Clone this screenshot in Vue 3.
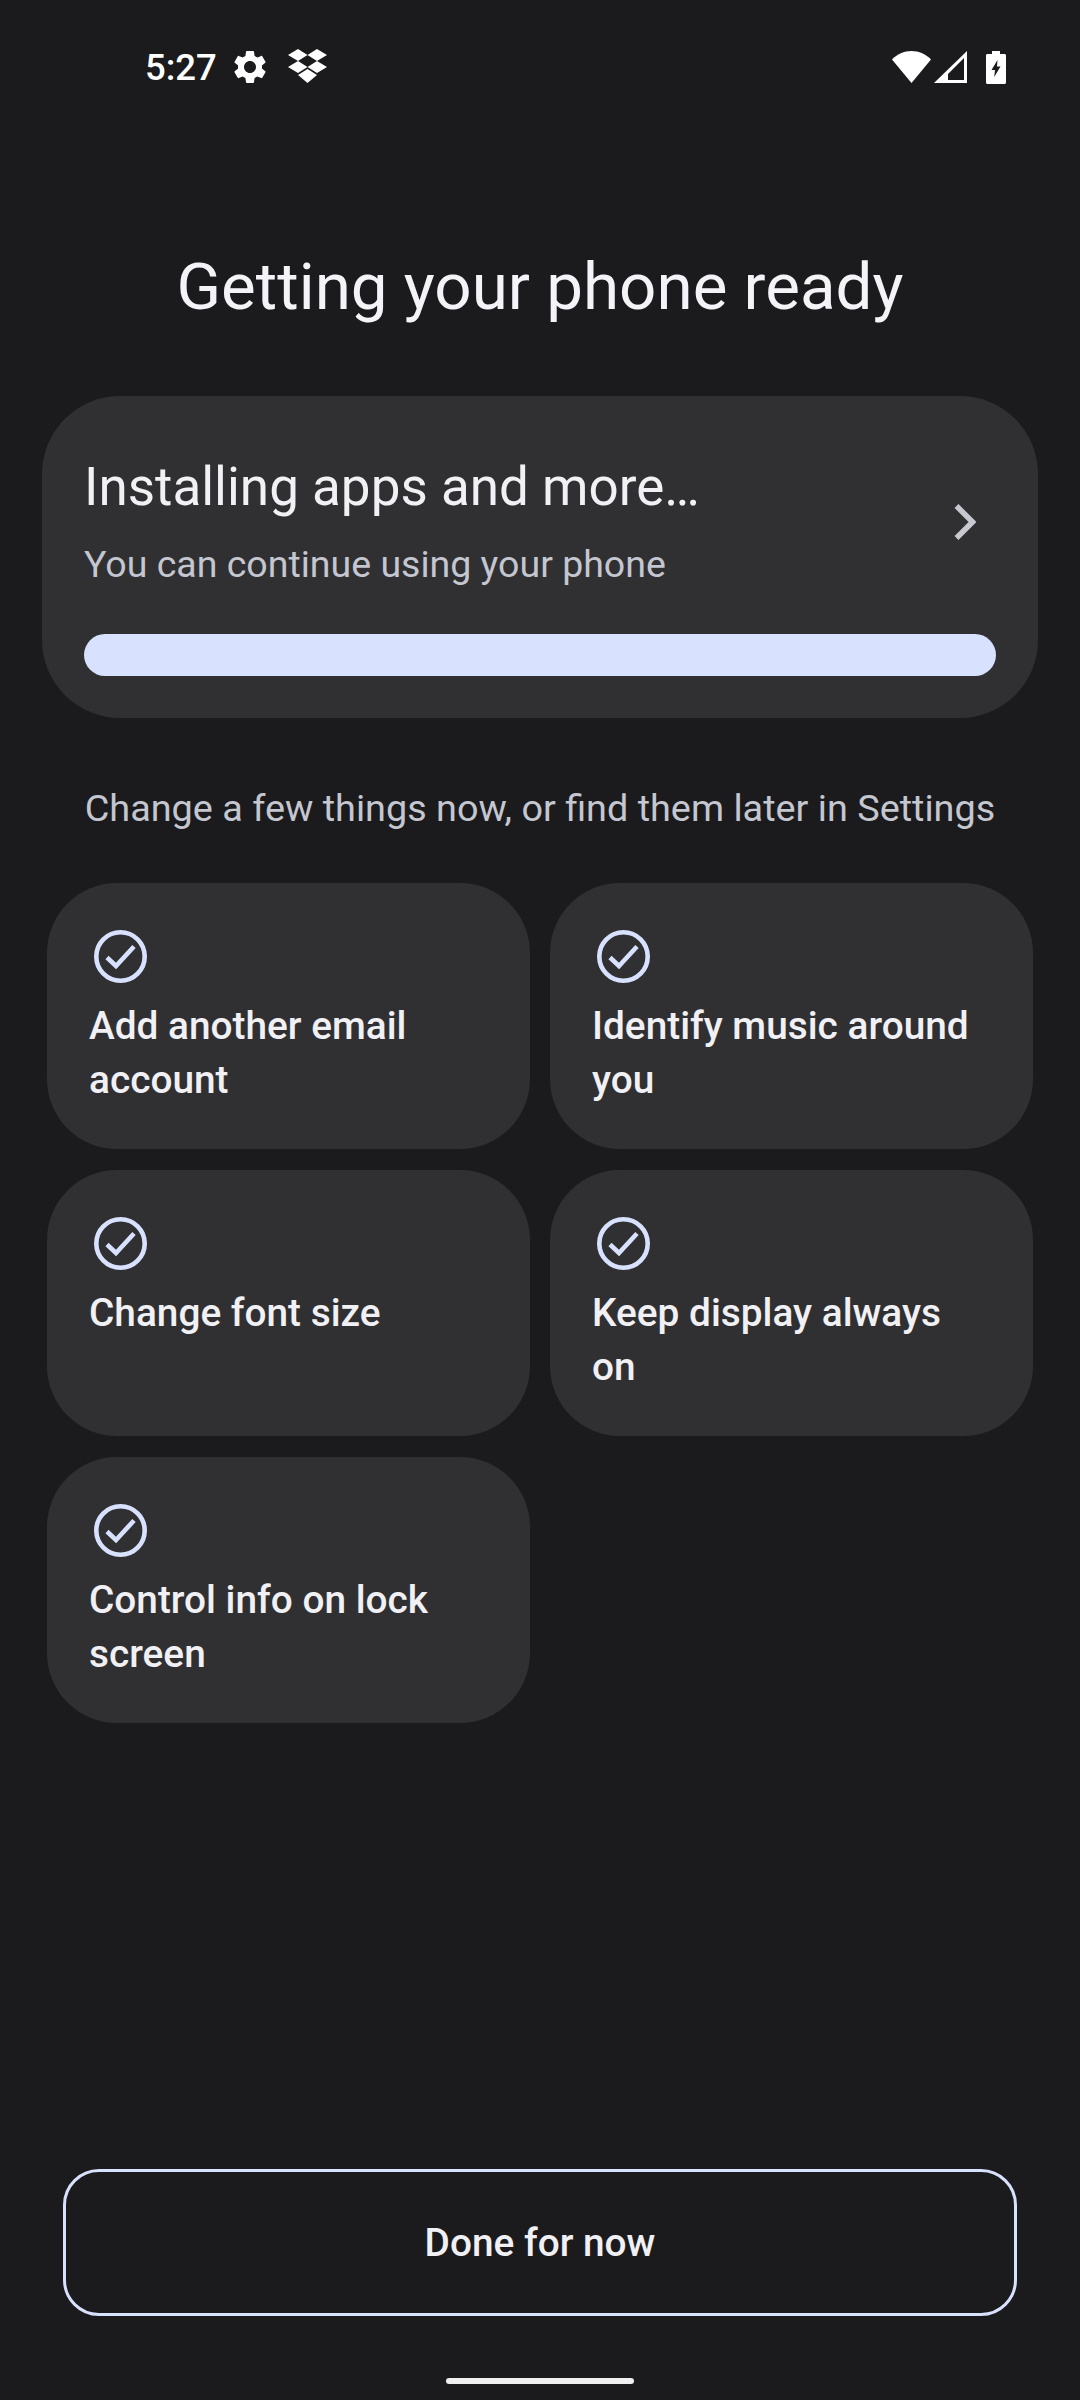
<template>
  <div class="screen">
    <header class="status-bar">
      <div class="status-left">
        <span class="clock">5:27</span>
        <svg class="gear" viewBox="0 0 24 24"><path fill="#fff" d="M19.14 12.94c.04-.3.06-.61.06-.94 0-.32-.02-.64-.07-.94l2.03-1.58c.18-.14.23-.41.12-.61l-1.92-3.32c-.12-.22-.37-.29-.59-.22l-2.39.96c-.5-.38-1.03-.7-1.62-.94l-.36-2.54c-.04-.24-.24-.41-.48-.41h-3.84c-.24 0-.43.17-.47.41l-.36 2.54c-.59.24-1.13.57-1.62.94l-2.39-.96c-.22-.08-.47 0-.59.22L2.74 8.87c-.12.21-.08.47.12.61l2.03 1.58c-.05.3-.09.63-.09.94s.02.64.07.94l-2.03 1.58c-.18.14-.23.41-.12.61l1.92 3.32c.12.22.37.29.59.22l2.39-.96c.5.38 1.03.7 1.62.94l.36 2.54c.05.24.24.41.48.41h3.84c.24 0 .44-.17.47-.41l.36-2.54c.59-.24 1.13-.56 1.62-.94l2.39.96c.22.08.47 0 .59-.22l1.92-3.32c.12-.22.07-.47-.12-.61l-2.01-1.58zM12 15.6c-1.98 0-3.6-1.62-3.6-3.6s1.62-3.6 3.6-3.6 3.6 1.62 3.6 3.6-1.62 3.6-3.6 3.6z"/></svg>
        <svg class="dropbox" viewBox="0 0 39 34"><path fill="#fff" d="M10 0l9.5 6-9.5 6L0 6zM29 0l10 6-10 6-9.5-6zM0 18l10-6 9.5 6-9.5 6zM29 12l10 6-10 6-9.5-6zM10 26l9.5-6 9.5 6-9.5 8z"/></svg>
      </div>
      <div class="status-right">
        <svg class="wifi" viewBox="0 0 39 32"><path fill="#fff" d="M19.5 32L0 8.5C5 3.2 12 0 19.5 0S34 3.2 39 8.5z"/></svg>
        <svg class="signal" viewBox="0 0 33 32"><path fill="#fff" fill-rule="evenodd" d="M33 0v32H0zM30 7L14 23v6h16z"/></svg>
        <svg class="battery" viewBox="0 0 20 33"><path fill="#fff" fill-rule="evenodd" d="M6 0h8v3h4.500c.9 0 1.500.6 1.500 1.500v27c0 .9-.6 1.500-1.500 1.500h-17C.6 33 0 32.400 0 31.500v-27C0 3.600.6 3 1.500 3H6zM11.500 9L5.500 19h3.500l-.8 7 6.300-10.500H11z"/></svg>
      </div>
    </header>

    <h1 class="title">Getting your phone ready</h1>

    <section class="hero">
      <div class="hero-top">
        <div>
          <div class="hero-title">Installing apps and more…</div>
          <div class="hero-sub">You can continue using your phone</div>
        </div>
        <svg class="chevron" viewBox="0 0 22 36"><path fill="none" stroke="#c8c8d0" stroke-width="5.500" d="M2.500 2L18.500 18 2.500 34"/></svg>
      </div>
      <div class="bar"></div>
    </section>

    <p class="hint">Change a few things now, or find them later in Settings</p>

    <div class="grid">
      <div v-for="item in items" :key="item" class="chip">
        <svg class="check" viewBox="0 0 53 53">
          <circle cx="26.500" cy="26.500" r="24.200" fill="none" stroke="#d8e2ff" stroke-width="4.600"/>
          <path fill="none" stroke="#d8e2ff" stroke-width="4.600" d="M13 27.500L22 36 40 16.500"/>
        </svg>
        <div class="chip-label">{{ item }}</div>
      </div>
    </div>

    <button class="done">Done for now</button>
    <div class="nav-pill"></div>
  </div>
</template>

<script setup>
const items = [
  'Add another email account',
  'Identify music around you',
  'Change font size',
  'Keep display always on',
  'Control info on lock screen'
]
</script>

<style>
html, body {
  margin: 0;
  background: #1b1b1d;
}
</style>

<style scoped>
.screen {
  height: 2400px;
  width: 1080px;
  background: #1b1b1d;
  color: #f1f0f4;
  font-family: Roboto, "Noto Sans", sans-serif;
  display: flex;
  flex-direction: column;
  box-sizing: border-box;
  overflow: hidden;
}

.status-bar {
  height: 134px;
  display: flex;
  align-items: center;
  justify-content: space-between;
  padding: 0 74px 0 145px;
  box-sizing: border-box;
}

.status-left, .status-right {
  display: flex;
  align-items: center;
}

.clock {
  font-size: 36.500px;
  font-weight: 500;
  color: #fff;
  width: 85px;
}

.gear {
  width: 40px;
  height: 40px;
}

.dropbox {
  width: 39px;
  height: 34px;
  margin-left: 18px;
  margin-top: -2px;
}

.wifi {
  width: 39px;
  height: 32px;
}

.signal {
  width: 33px;
  height: 32px;
  margin-left: 3px;
}

.battery {
  width: 20px;
  height: 33px;
  margin-left: 19px;
}

.title {
  margin: 110px 0 0;
  height: 86px;
  line-height: 86px;
  font-size: 65.500px;
  font-weight: 400;
  text-align: center;
  color: #f4f3f7;
}

.hero {
  margin: 66px 42px 0;
  height: 322px;
  border-radius: 78px;
  background: #303032;
  padding: 0 42px;
  box-sizing: border-box;
}

.hero-top {
  display: flex;
  align-items: flex-start;
  justify-content: space-between;
  height: 238px;
}

.hero-title {
  margin-top: 57px;
  font-size: 53px;
  line-height: 68px;
}

.hero-sub {
  margin-top: 18px;
  font-size: 37.500px;
  line-height: 50px;
  color: #c4c6d0;
}

.chevron {
  width: 22px;
  height: 36px;
  margin-top: 108px;
  margin-right: 20px;
}

.bar {
  height: 42px;
  border-radius: 21px;
  background: #d8e2ff;
}

.hint {
  margin: 63px 0 0;
  height: 54px;
  line-height: 54px;
  font-size: 37.800px;
  text-align: center;
  color: #c4c6d0;
}

.grid {
  margin-top: 48px;
  padding: 0 47px;
  display: grid;
  grid-template-columns: 483px 483px;
  grid-auto-rows: 266px;
  column-gap: 20px;
  row-gap: 21px;
}

.chip {
  background: #303032;
  border-radius: 70px;
  padding: 47px 48px 0 42px;
  box-sizing: border-box;
}

.check {
  display: block;
  width: 53px;
  height: 53px;
  margin-left: 5px;
}

.chip-label {
  margin-top: 16px;
  font-size: 38.800px;
  line-height: 53.500px;
  font-weight: 475;
}

.done {
  margin: auto 63px 0;
  height: 147px;
  border: 3px solid #d8e2ff;
  border-radius: 36px;
  background: transparent;
  color: #f1f0f4;
  font: 475 38.800px Roboto, "Noto Sans", sans-serif;
}

.nav-pill {
  width: 188px;
  height: 6px;
  border-radius: 3px;
  background: #f0f0f0;
  margin: 62px auto 16px;
}
</style>
